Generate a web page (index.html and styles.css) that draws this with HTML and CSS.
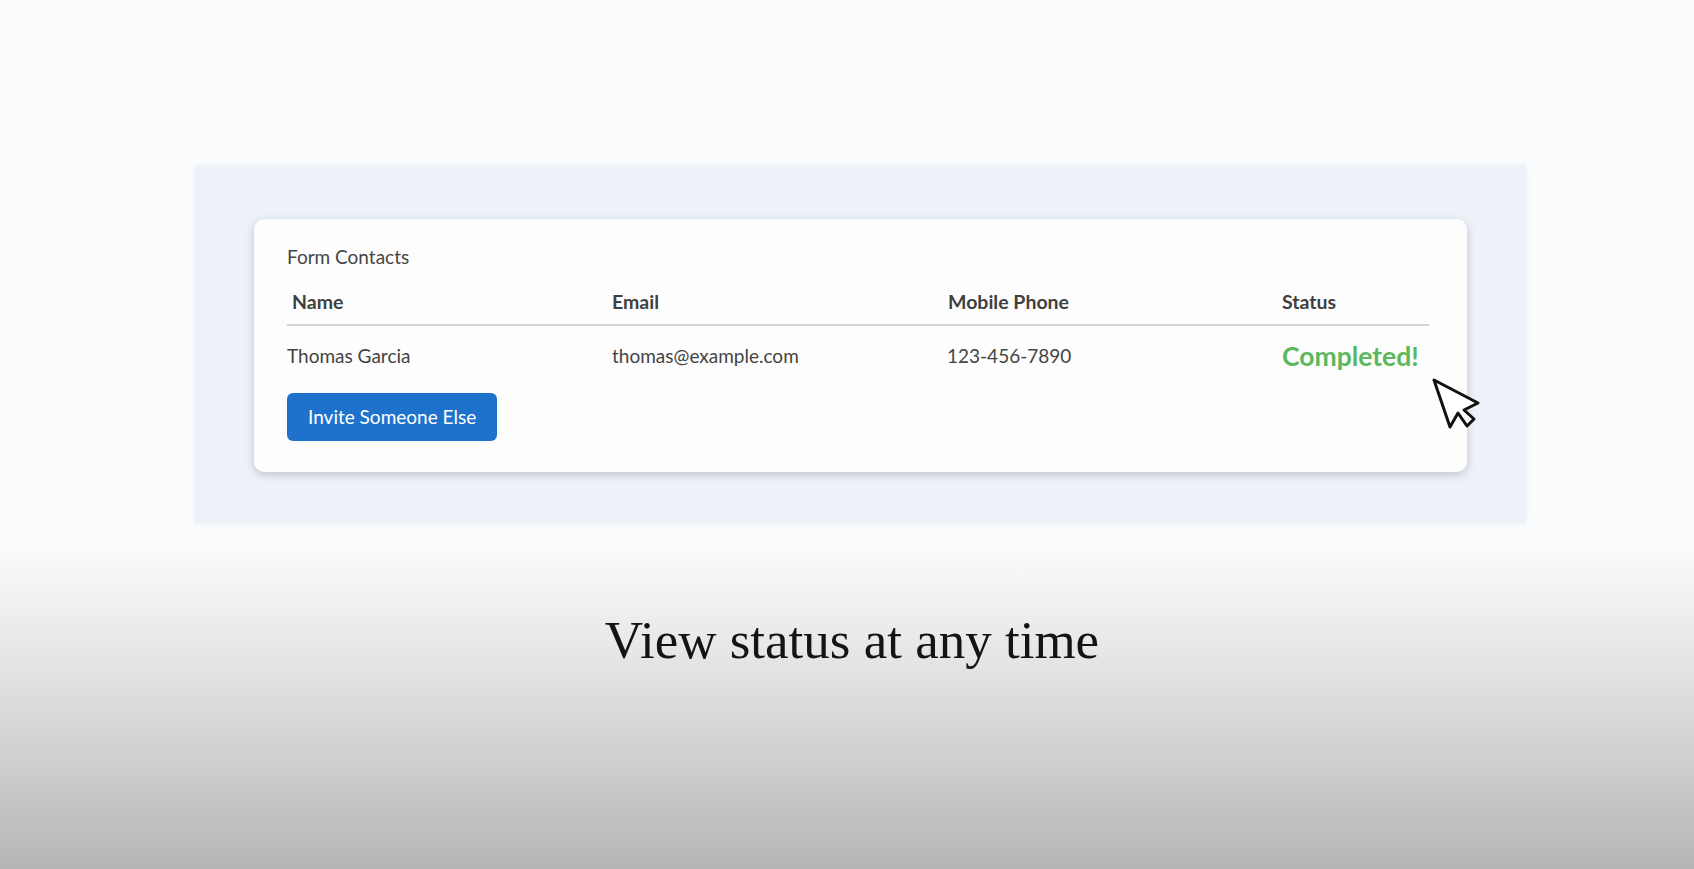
FILE: index.html
```html
<html>
<head>
  <link rel="stylesheet" href="styles.css">
</head>
<body>
  <div class="stage">
    <div class="panel">
      <div class="card">
        <div class="card-title">Form Contacts</div>
        <div class="contacts">
          <div class="row head">
            <div class="cell">Name</div>
            <div class="cell">Email</div>
            <div class="cell">Mobile Phone</div>
            <div class="cell">Status</div>
          </div>
          <div class="row">
            <div class="cell">Thomas Garcia</div>
            <div class="cell">thomas@example.com</div>
            <div class="cell">123-456-7890</div>
            <div class="cell status">Completed!</div>
          </div>
        </div>
        <button class="invite">Invite Someone Else</button>

        <!-- mouse pointer over the status -->
        <svg class="pointer" width="52" height="56" viewBox="0 0 52 56">
          <polygon points="3,3 19,50 27,36 36,49 43,42 33,33 47,26"
                   fill="#fff" stroke="#111" stroke-width="3" stroke-linejoin="round"/>
        </svg>
      </div>
    </div>
    <h1 class="caption">View status at any time</h1>
  </div>
</body>
</html>
```

FILE: styles.css
```css
body {
  margin: 0;
  font-family: Lato, "Open Sans", sans-serif;
  background: linear-gradient(to bottom,
    #fbfcfd 0, #fbfcfd 540px, #e6e7e8 650px, #cfcfd1 760px, #b5b5b7 869px);
  background-repeat: no-repeat;
  background-color: #b5b5b7;
}

.stage {
  height: 869px;
  overflow: hidden;
  padding-top: 165px;
  box-sizing: border-box;
}

.panel {
  margin-left: 195px;
  width: 1331px;
  box-sizing: border-box;
  padding: 54px 59px 52px 59px;
  background-color: #edf1f8;
  box-shadow: 0 0 6px #edf1f8;
}

.card {
  position: relative;
  background-color: #fdfdfd;
  border-radius: 10px;
  box-shadow: 0 3px 10px rgba(0, 0, 0, 0.18);
  padding: 26px 38px 31px 33px;
}

.card-title {
  font-size: 19px;
  line-height: 24px;
  color: #454545;
  margin-bottom: 11px;
}

.contacts {
  margin-bottom: 25px;
}

.row {
  display: grid;
  grid-template-columns: 325px 335px 335px 1fr;
  color: #444;
  font-size: 19px;
  line-height: 24px;
  padding: 18px 0 0 0;
}

.row.head {
  font-weight: bold;
  font-size: 19.5px;
  color: #404040;
  padding: 10px 0 10px 5px;
  border-bottom: 2px solid #d2d2d2;
  grid-template-columns: 320px 336px 334px 1fr;
}

.status {
  color: #5cb85c;
  font-weight: bold;
  font-size: 26.5px;
}

.invite {
  font-family: Lato, "Open Sans", sans-serif;
  font-size: 19px;
  line-height: 24px;
  color: #fff;
  background-color: #1f72cb;
  border: none;
  border-radius: 6px;
  padding: 12px 21px;
  cursor: pointer;
}

.pointer {
  position: absolute;
  left: 1177px;
  top: 158px;
}

.caption {
  margin: 86px 0 0 0;
  text-align: center;
  font-family: "Liberation Serif", serif;
  font-weight: normal;
  font-size: 53px;
  line-height: 60px;
  color: #141414;
  padding-left: 10px;
}
```
